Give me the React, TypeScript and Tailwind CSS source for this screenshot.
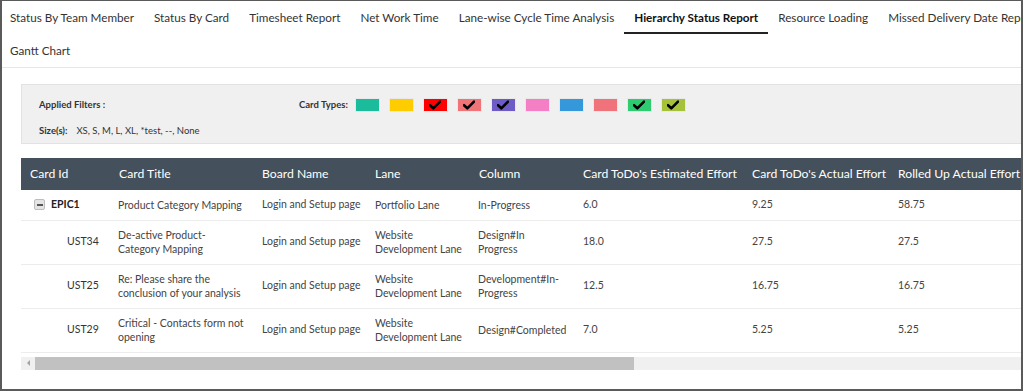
import React from "react";

const tabs = [
  "Status By Team Member",
  "Status By Card",
  "Timesheet Report",
  "Net Work Time",
  "Lane-wise Cycle Time Analysis",
  "Hierarchy Status Report",
  "Resource Loading",
  "Missed Delivery Date Report",
  "Gantt Chart",
];

const swatches: { c: string; check: boolean }[] = [
  { c: "#1abc9c", check: false },
  { c: "#ffcc00", check: false },
  { c: "#ff0000", check: true },
  { c: "#f07378", check: true },
  { c: "#6f5bc6", check: true },
  { c: "#f47fc4", check: false },
  { c: "#3498db", check: false },
  { c: "#f0727a", check: false },
  { c: "#2ecc71", check: true },
  { c: "#a6c23b", check: true },
];

const cols = [
  { t: "Card Id", w: 89 },
  { t: "Card Title", w: 143 },
  { t: "Board Name", w: 113 },
  { t: "Lane", w: 104 },
  { t: "Column", w: 104 },
  { t: "Card ToDo's Estimated Effort", w: 169 },
  { t: "Card ToDo's Actual Effort", w: 146 },
  { t: "Rolled Up Actual Effort", w: 170 },
  { t: "Rolled Up Estimated Effort", w: 170 },
];

const rows = [
  { id: "EPIC1", epic: true, title: "Product Category Mapping", board: "Login and Setup page", lane: "Portfolio Lane", col: "In-Progress", est: "6.0", act: "9.25", ru: "58.75", rue: "" },
  { id: "UST34", epic: false, title: "De-active Product-Category Mapping", board: "Login and Setup page", lane: "Website Development Lane", col: "Design#In Progress", est: "18.0", act: "27.5", ru: "27.5", rue: "" },
  { id: "UST25", epic: false, title: "Re: Please share the conclusion of your analysis", board: "Login and Setup page", lane: "Website Development Lane", col: "Development#In-Progress", est: "12.5", act: "16.75", ru: "16.75", rue: "" },
  { id: "UST29", epic: false, title: "Critical - Contacts form not opening", board: "Login and Setup page", lane: "Website Development Lane", col: "Design#Completed", est: "7.0", act: "5.25", ru: "5.25", rue: "" },
];

function Check() {
  return (
    <svg width="12" height="10" viewBox="0 0 12 10">
      <path d="M1 5.2 L4.3 8.3 L11 1.6" stroke="#000" strokeWidth="2.6" fill="none" strokeLinecap="round" strokeLinejoin="round" />
    </svg>
  );
}

export default function App() {
  return (
    <div className="w-[1024px] h-[391px] bg-white overflow-hidden" style={{ fontFamily: "Lato, 'Open Sans', sans-serif" }}>
      <div className="w-[1023px] h-[391px] border-l-2 border-t border-r-2 border-b-2 border-[#5a5a5a] overflow-hidden relative">
        {/* Tabs */}
        <div className="w-[1100px] flex flex-wrap border-b border-[#e6e6e6]">
          {tabs.map((t, i) => {
            const active = t === "Hierarchy Status Report";
            return (
              <div
                key={t}
                className={`h-[33px] px-[10px] flex items-center text-[11.7px] whitespace-nowrap ${active ? "font-bold text-[#111] border-b-2 border-[#222] pt-[2px]" : "text-[#333]"} ${i === 0 || i === 8 ? "pl-[8px]" : ""}`}
              >
                {t}
              </div>
            );
          })}
        </div>

        <div className="pl-[19px] pt-[16px]">
          {/* Filters */}
          <div className="w-[1020px] h-[60px] bg-[#f0f0f0] border border-[#e2e2e2] text-[9.5px] text-[#333]">
            <div className="flex items-center h-[28px] pt-[12px]">
              <div className="w-[277px] pl-[17px] font-bold">Applied Filters :</div>
              <div className="font-bold mr-[7px]">Card Types:</div>
              <div className="flex gap-[9px]">
                {swatches.map((s, i) => (
                  <div key={i} className="w-[25px] h-[14px] flex items-center justify-center border border-[#e8e8e8]" style={{ backgroundColor: s.c }}>
                    {s.check && <Check />}
                  </div>
                ))}
              </div>
            </div>
            <div className="flex items-center pl-[17px] mt-[11px]">
              <span className="font-bold mr-[9px]">Size(s):</span>
              <span>XS, S, M, L, XL, *test, --, None</span>
            </div>
          </div>

          {/* Table */}
          <div className="mt-[14px] w-[1020px] overflow-hidden">
            <table className="border-collapse table-fixed w-[1208px]">
              <thead>
                <tr className="bg-[#44515c] h-[32px]">
                  {cols.map((c) => (
                    <th key={c.t} className="text-left font-normal text-white text-[12.2px] px-[9px] whitespace-nowrap" style={{ width: c.w }}>
                      {c.t}
                    </th>
                  ))}
                </tr>
              </thead>
              <tbody className="text-[10.5px] text-[#444]">
                {rows.map((r) => (
                  <tr key={r.id} className={`border-b border-[#ececec] ${r.epic ? "h-[30px]" : "h-[44px]"}`}>
                    <td className="px-[9px] align-middle">
                      {r.epic ? (
                        <div className="flex items-center gap-[6px] pl-[4px]">
                          <div className="w-[11px] h-[11px] bg-[#e4e4e4] border border-[#bdbdbd] rounded-[2px] flex items-center justify-center">
                            <div className="w-[6px] h-[1.5px] bg-[#555]" />
                          </div>
                          <span className="font-bold text-[#222]">{r.id}</span>
                        </div>
                      ) : (
                        <span className="pl-[37px] text-[#333]">{r.id}</span>
                      )}
                    </td>
                    <td className="px-[8px] leading-[14px]">{r.title}</td>
                    <td className="px-[9px] whitespace-nowrap">{r.board}</td>
                    <td className="pl-[9px] pr-[2px] leading-[14px]">{r.lane}</td>
                    <td className="px-[8px] leading-[14px]">{r.col}</td>
                    <td className="px-[9px]">{r.est}</td>
                    <td className="px-[9px]">{r.act}</td>
                    <td className="px-[9px]">{r.ru}</td>
                    <td className="px-[9px]">{r.rue}</td>
                  </tr>
                ))}
              </tbody>
            </table>
            {/* scrollbar */}
            <div className="mt-[4px] h-[13px] bg-[#f0f0f0] flex items-center">
              <div className="w-[14px] h-[13px] flex items-center justify-center">
                <div className="w-0 h-0 border-t-[3px] border-b-[3px] border-r-[3px] border-t-transparent border-b-transparent border-r-[#a3a3a3]" />
              </div>
              <div className="w-[599px] h-[13px] bg-[#c1c1c1]" />
            </div>
          </div>
        </div>
      </div>
    </div>
  );
}
